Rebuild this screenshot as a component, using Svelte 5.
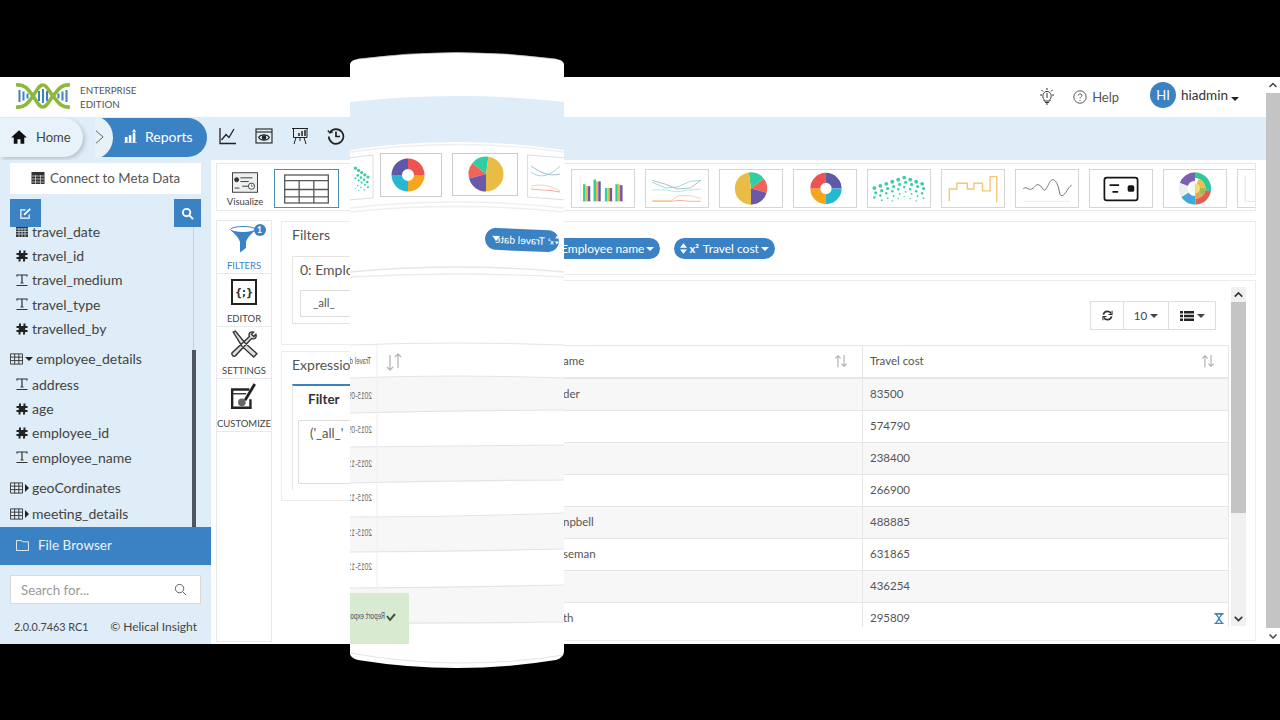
<script>
  function pt(cx, cy, r, a) {
    const t = ((a - 90) * Math.PI) / 180;
    return `${(cx + r * Math.cos(t)).toFixed(2)} ${(cy + r * Math.sin(t)).toFixed(2)}`;
  }
  function sector(cx, cy, r0, r1, a0, a1) {
    const big = a1 - a0 > 180 ? 1 : 0;
    if (r0 === 0) return `M${cx} ${cy}L${pt(cx, cy, r1, a0)}A${r1} ${r1} 0 ${big} 1 ${pt(cx, cy, r1, a1)}Z`;
    return `M${pt(cx, cy, r0, a0)}L${pt(cx, cy, r1, a0)}A${r1} ${r1} 0 ${big} 1 ${pt(cx, cy, r1, a1)}L${pt(cx, cy, r0, a1)}A${r0} ${r0} 0 ${big} 0 ${pt(cx, cy, r0, a0)}Z`;
  }
  const Y = '#e9bd45', TE = '#2ecfa0', R = '#f0655a', P = '#6a58a8', B = '#26b8d0', O = '#f8a51e', D = '#5c5aa8', RD = '#ef5350';
  const pieSlices = [[-8, 52, TE], [52, 105, R], [105, 180, P], [180, 352, Y]];
  const donutSlices = [[0, 90, D], [90, 180, B], [180, 270, O], [270, 360, RD]];
  const burst = [
    [8, 17, 290, 360, '#7b62ae'], [11, 17, 0, 100, '#2fc79c'], [11, 17, 100, 178, '#e0604f'],
    [8, 17, 178, 238, '#43a7dc'], [8, 17, 238, 290, '#eeeeee'], [5, 11, 20, 85, '#e6c04a'],
    [5, 11, 85, 135, '#9dbb5c'], [5, 11, 135, 178, '#e9a24c'], [0, 5, 0, 180, '#f2dc7a'], [0, 5, 180, 360, '#f4f4f4']
  ];

  const tree = [
    { k: 'cal', t: 'travel_date' }, { k: 'num', t: 'travel_id' }, { k: 'txt', t: 'travel_medium' },
    { k: 'txt', t: 'travel_type' }, { k: 'num', t: 'travelled_by' },
    { k: 'open', t: 'employee_details' }, { k: 'txt', t: 'address' }, { k: 'num', t: 'age' },
    { k: 'num', t: 'employee_id' }, { k: 'txt', t: 'employee_name' },
    { k: 'closed', t: 'geoCordinates' }, { k: 'closed', t: 'meeting_details' }
  ];
  const rows = [
    ['der', '83500'], ['', '574790'], ['', '238400'], ['', '266900'],
    ['npbell', '488885'], ['seman', '631865'], ['', '436254'], ['th', '295809']
  ];
  // curved horizontal rules of the turning page: left, middle, right
  const rules = [[345, 343, 345], [378, 376, 378], [413, 411, 410], [447, 446, 445], [483, 481, 480], [517, 516, 513], [552, 551, 549], [588, 587, 585], [623, 623, 622], [653, 663, 655]];
  const curve = (a) => `M350 ${a[0]}Q457 ${2 * a[1] - (a[0] + a[2]) / 2} 564 ${a[2]}`;
  const stripe = (a, b) => `${curve(a)}L564 ${b[2]}Q457 ${2 * b[1] - (b[0] + b[2]) / 2} 350 ${b[0]}Z`;
  const dates = [[395, '2015-09'], [429, '2015-09'], [463, '2015-11'], [497, '2015-11'], [532, '2015-11'], [566, '2015-11']];
  const dots = [];
  for (let c = 0; c < 9; c++) for (let r = 0; r < 5; r++) {
    const top = 8 + Math.abs(c - 5) * 2.2 + r * 5;
    if (top < 34) dots.push([6 + c * 6.3 + (r % 2) * 1.5, top, Math.max(0.7, 2 - r * 0.35)]);
  }
</script>

{#snippet bars()}
  <svg class="thumbsvg" viewBox="0 0 64 39">
    <path d="M8 33H56M8 6V33" stroke="#e6e6e6" fill="none" stroke-width=".7" />
    {#each [[11, 18, 16, 16], [22, 23, 21, 21], [34, 14, 14, 14], [45, 18, 18, 17]] as g}
      <rect x={g[0]} y={33 - g[1]} width="2.6" height={g[1]} fill={TE} />
      <rect x={g[0] + 2.6} y={33 - g[2]} width="2.4" height={g[2]} fill={Y} />
      <rect x={g[0] + 5} y={33 - g[3]} width="2.6" height={g[3]} fill={P} />
    {/each}
  </svg>
{/snippet}
{#snippet lines()}
  <svg class="thumbsvg" viewBox="0 0 64 39" fill="none" stroke-width=".7">
    <path d="M6 11 20 15 32 20 46 19 57 11" stroke="#8a9aa8" />
    <path d="M6 13 20 19 32 18 46 12 57 11" stroke="#6dc6d8" />
    <path d="M6 21 20 21 32 23 46 21 57 20" stroke="#8fdcc8" />
    <path d="M6 32 26 32 34 27 46 27 57 30" stroke="#f4c27c" />
    <path d="M6 33 26 33 34 32 46 33 57 33" stroke="#ef8a7a" />
  </svg>
{/snippet}
{#snippet pie()}
  <svg class="thumbsvg" viewBox="0 0 64 39">
    {#each pieSlices as s}<path d={sector(32, 19.5, 0, 17, s[0], s[1])} fill={s[2]} />{/each}
  </svg>
{/snippet}
{#snippet donut()}
  <svg class="thumbsvg" viewBox="0 0 64 39">
    {#each donutSlices as s}<path d={sector(33, 19.5, 6, 16.5, s[0], s[1])} fill={s[2]} />{/each}
  </svg>
{/snippet}
{#snippet scatter()}
  <svg class="thumbsvg" viewBox="0 0 64 39">
    {#each dots as d}<circle cx={d[0]} cy={d[1]} r={d[2]} fill="#37cfa4" />{/each}
  </svg>
{/snippet}
{#snippet step()}
  <svg class="thumbsvg" viewBox="0 0 64 39" fill="none">
    <path d="M7 33V20H15V14H26V20H33V14H42V22H50V7H57V34" stroke="#f3c778" stroke-width="1.5" />
  </svg>
{/snippet}
{#snippet wave()}
  <svg class="thumbsvg" viewBox="0 0 64 39" fill="none">
    <path d="M7 33H57" stroke="#e5e5e5" stroke-width=".7" />
    <path d="M7 20C10 16 12 22 16 20S20 14 24 16 28 24 31 20 36 6 41 12 44 28 48 27 54 18 58 16" stroke="#6f6a70" stroke-width="1" />
  </svg>
{/snippet}
{#snippet card()}
  <svg class="thumbsvg" viewBox="0 0 64 39" fill="none">
    <rect x="14.5" y="8" width="35" height="24" rx="2.5" stroke="#151515" stroke-width="1.8" />
    <path d="M20 16H30M23 23H29" stroke="#151515" stroke-width="1.8" />
    <rect x="39" y="16" width="7" height="7" rx="2" fill="#151515" />
  </svg>
{/snippet}
{#snippet sunburst()}
  <svg class="thumbsvg" viewBox="0 0 64 39">
    {#each burst as s}<path d={sector(32, 19.5, s[0], s[1], s[2], s[3])} fill={s[4]} />{/each}
  </svg>
{/snippet}
{#snippet blank()}
  <svg class="thumbsvg" viewBox="0 0 64 39" fill="none"><path d="M7 6V33H18" stroke="#e5e5e5" /></svg>
{/snippet}
{#snippet sortIcon()}
  <svg class="sort" viewBox="0 0 16 16" fill="none" stroke="#a9a9a9" stroke-width="1.2">
    <path d="M4.5 15V2M1.5 5l3-3 3 3M11.5 1v13M8.5 11l3 3 3-3" />
  </svg>
{/snippet}
{#snippet caret()}<span class="caret"></span>{/snippet}

<div class="page">
  <div class="gap-top"></div>
  <div class="screen">
    <div class="app">
      <header class="header">
        <svg class="logo" viewBox="0 0 56 26" fill="none">
          <path d="M4.5 7V19M8.5 8.500V17.500M12.500 10.500V15.500M24 8V18M28 6V20M32 8V18M43.500 10.500V15.500M47.500 8.500V17.500M51.500 7V19" stroke="#3a82c4" stroke-width="2" />
          <path d="M1 2C10 1 13 6 18 13S24 24 28 24 33 19 38 13 46 1 55 2" stroke="#8db93b" stroke-width="3.6" />
          <path d="M1 24C10 25 13 20 18 13S24 2 28 2 33 7 38 13 46 25 55 24" stroke="#8db93b" stroke-width="3.6" />
        </svg>
        <div class="edition"><span>ENTERPRISE</span><span>EDITION</span></div>
        <div class="spacer"></div>
        <svg class="bulb" viewBox="0 0 18 18" fill="none" stroke="#333" stroke-width="1">
          <path d="M6 12.500C4 10 4.500 4.500 9 4.500S14 10 12 12.500V14H6Z" /><path d="M7 15.500H11M8 17H10M9 6V11M9 1V3M2 8H4M14 8H16M3.500 3L5 4.500M14.500 3L13 4.500" />
        </svg>
        <div class="help">
          <svg viewBox="0 0 14 14" fill="none" stroke="#444" stroke-width=".9"><circle cx="7" cy="7" r="6.200" /><path d="M5.200 5.500C5.200 3.300 8.900 3.300 8.900 5.400 8.900 6.700 7 6.700 7 8.400M7 10V11" /></svg>
          <span>Help</span>
        </div>
        <div class="avatar">HI</div>
        <span class="user">hiadmin</span>{@render caret()}
      </header>

      <div class="band">
        <div class="crumbs">
          <div class="home">
            <svg viewBox="0 0 24 24" fill="#111"><path d="M12 3 1.500 12.500H5V21H10V15H14V21H19V12.500H22.500Z" /></svg>
            <span>Home</span>
          </div>
          <div class="reports">
            <svg class="chev" viewBox="0 0 10 16" fill="none" stroke="#555" stroke-width="1"><path d="M1 1 9 8 1 15" /></svg>
            <svg class="barsico" viewBox="0 0 16 16" fill="#fff"><path d="M1 9H4V15H1ZM5.500 7H8.500V15H5.500ZM10 4H13V15H10ZM0 15.500H15V16H0ZM11.500 0 14 3H9Z" /></svg>
            <span>Reports</span>
          </div>
        </div>
        <div class="navicons">
          <svg viewBox="0 0 18 18" fill="none" stroke="#222" stroke-width="1.300"><path d="M1 1V16.500H17" /><path d="M2.500 13 7 7.500 10 10.500 15 2" /></svg>
          <svg viewBox="0 0 18 18" fill="none" stroke="#222" stroke-width="1.100"><rect x="1" y="2" width="16" height="14" /><path d="M1 5H17" /><path d="M3.500 10.500C6 7 12 7 14.500 10.500 12 14 6 14 3.500 10.500Z" /><circle cx="9" cy="10.500" r="1.700" fill="#222" /></svg>
          <svg viewBox="0 0 18 18" fill="none" stroke="#222" stroke-width="1"><path d="M1 1.500H17M2.500 1.500V10.500H16V1.500M5 10.500 3 17M13 10.500 15 17M9 10.500V14" /><path d="M8 9V6M11 9V4M14 9V3" stroke-width="1.500" /></svg>
          <svg viewBox="0 0 18 18" fill="none" stroke="#222" stroke-width="1.700"><path d="M3 5.500A7.300 7.300 0 1 1 1.800 9.500" /><path d="M9 4.500V9.500H13" /><path d="M.8 3.500 3 6 5.800 5" stroke-width="1.300" /></svg>
        </div>
      </div>

      <div class="work">
        <aside class="sidebar">
          <div class="side-top">
            <div class="connect">
              <svg viewBox="0 0 14 14"><rect x=".5" y="1" width="13" height="12" fill="#333" /><path d="M1 5H13M1 8H13M1 11H13M4.500 4V13M9.500 4V13" stroke="#ccc" stroke-width=".8" /></svg>
              <span>Connect to Meta Data</span>
            </div>
            <div class="actions">
              <div class="sqbtn wide"><svg viewBox="0 0 14 14" fill="none" stroke="#fff" stroke-width="1.300"><path d="M11 8V12H2V3H7" /><path d="M5.500 8.500 12 2" stroke-width="2" /></svg></div>
              <div class="sqbtn"><svg viewBox="0 0 14 14" fill="none" stroke="#fff" stroke-width="2"><circle cx="6" cy="6" r="4" /><path d="M9 9 13 13" /></svg></div>
            </div>
          </div>
          <div class="tree">
            <div class="track"></div><div class="thumb"></div>
            {#each tree as n}
              {#if n.k === 'open' || n.k === 'closed'}
                <div class="group">
                  <svg class="tbl" viewBox="0 0 14 12" fill="none" stroke="#333"><path d="M.5 .5H13.500V11.500H.5ZM.5 4H13.500M.5 7.700H13.500M5 .5V11.500M9.500 .5V11.500" /></svg>
                  {#if n.k === 'open'}<span class="tri-d"></span>{:else}<span class="tri-r"></span>{/if}
                  <span>{n.t}</span>
                </div>
              {:else}
                <div class="leaf">
                  {#if n.k === 'cal'}
                    <svg viewBox="0 0 12 12"><rect width="12" height="12" fill="#333" /><path d="M0 4H12M0 6.500H12M0 9H12M3 3V12M6 3V12M9 3V12" stroke="#dcebf5" stroke-width=".7" /></svg>
                  {:else if n.k === 'num'}
                    <svg viewBox="0 0 12 12" fill="none" stroke="#222" stroke-width="2"><path d="M4 .5 3.500 11.500M8.500 .5 8 11.500M.5 4H11.500M.5 8H11.500" /><circle cx="6" cy="6" r="2" fill="#222" stroke="none" /></svg>
                  {:else}
                    <svg viewBox="0 0 12 12" fill="none" stroke="#333" stroke-width="1.200"><path d="M1 2.500V1H11V2.500M6 1V9M4.500 9H7.500M.5 11.500H11.500" /></svg>
                  {/if}
                  <span>{n.t}</span>
                </div>
              {/if}
            {/each}
          </div>
          <div class="browser">
            <svg viewBox="0 0 14 12" fill="none" stroke="#fff" stroke-width=".9"><path d="M.5 .5H6L7 2H13.500V11.500H.5Z" /></svg>
            <span>File Browser</span>
          </div>
          <div class="searchbox">
            <span>Search for...</span>
            <svg viewBox="0 0 14 14" fill="none" stroke="#555" stroke-width="1"><circle cx="6" cy="6" r="4.500" /><path d="M9.500 9.500 13 13" /></svg>
          </div>
          <div class="foot"><span class="ver">2.0.0.7463 RC1</span><span>© Helical Insight</span></div>
        </aside>

        <main class="main">
          <div class="toolbar">
            <div class="viz">
              <svg viewBox="0 0 28 22" fill="none" stroke="#333"><rect x=".5" y=".5" width="27" height="21" fill="#eef0f0" /><path d="M9 6H22M9 10H18M3 17H8M11 15H18" stroke-width="1" /><circle cx="5" cy="8" r="2.200" fill="#333" /><circle cx="21" cy="15" r="3.300" fill="#fff" /><path d="M21 13V15H23" stroke-width=".7" /></svg>
              <span>Visualize</span>
            </div>
            <div class="tablepick">
              <svg viewBox="0 0 46 30" fill="none" stroke="#555" stroke-width="1.300"><rect x=".7" y=".7" width="44.600" height="28.600" /><path d="M.7 6.500H45.300M.7 15.500H45.300M.7 23H45.300M15.500 6.500V29.300M30.500 6.500V29.300" /></svg>
            </div>
            <div class="thumbs">
              <div class="th">{@render bars()}</div>
              <div class="th">{@render lines()}</div>
              <div class="th">{@render pie()}</div>
              <div class="th">{@render donut()}</div>
              <div class="th">{@render scatter()}</div>
              <div class="th">{@render step()}</div>
              <div class="th">{@render wave()}</div>
              <div class="th">{@render card()}</div>
              <div class="th">{@render sunburst()}</div>
              <div class="th">{@render blank()}</div>
            </div>
          </div>

          <div class="lower">
            <nav class="rail">
              <div class="railitem" style="height:53px">
                <div class="funnel">
                  <svg viewBox="0 0 26 27"><ellipse cx="13" cy="3.500" rx="12.500" ry="3" fill="#fff" stroke="#3a82c4" /><path d="M.5 4C5 8 9 12 10 16V26.500L16 22V16C17 12 21 8 25.500 4 20 7 6 7 .5 4Z" fill="#3a82c4" /></svg>
                  <b class="badge">1</b>
                </div>
                <span class="blue">FILTERS</span>
              </div>
              <div class="railitem" style="height:53px">
                <div class="editorbox">{'{;}'}</div>
                <span>EDITOR</span>
              </div>
              <div class="railitem" style="height:52px">
                <svg class="rico" viewBox="0 0 26 26" fill="none" stroke="#333" stroke-width="1.300"><path d="M3 2 5 1 14 12 25 22 22 25 11 15ZM22 2C19 1 17 3 18 6L2 21C1 23 3 25 5 24L20 8C23 9 25 7 24 4L22 6 20 4Z" fill="#ddd" /></svg>
                <span>SETTINGS</span>
              </div>
              <div class="railitem" style="height:53px">
                <svg class="rico" viewBox="0 0 26 26" fill="none" stroke="#222" stroke-width="2.200"><path d="M18 6H2V23H19V15" /><path d="M2 10H15" stroke-width="1.200" /><path d="M23 1 14 16" stroke-width="2.600" /><circle cx="11" cy="18" r="3.500" fill="#666" stroke="none" /></svg>
                <span>CUSTOMIZE</span>
              </div>
            </nav>

            <div class="stage-a">
              <section class="box filters">
                <h4>Filters</h4>
                <div class="subbox">
                  <div class="subttl">0: Employee</div>
                  <div class="inp">_all_</div>
                </div>
              </section>
              <section class="box expr">
                <h4>Expressions</h4>
                <div class="tabs">
                  <b>Filter</b>
                  <div class="area">('_all_'</div>
                </div>
              </section>
            </div>

            <div class="stage-b">
              <section class="pillbox">
                <div class="pill first"><span>Employee name</span>{@render caret()}</div>
                <div class="pill">
                  <svg viewBox="0 0 8 12" fill="#fff"><path d="M4 0 8 5H0ZM4 12 0 7H8Z" /></svg>
                  <b>x²</b><span>Travel cost</span>{@render caret()}
                </div>
              </section>
              <section class="tablebox">
                <div class="tablecol">
                  <div class="btns">
                    <div class="btn w33"><svg viewBox="0 0 12 12" fill="none" stroke="#333" stroke-width="1.900"><path d="M1.500 5A4.500 4.500 0 0 1 10 4M10.500 7A4.500 4.500 0 0 1 2 8" /><path d="M11 .8V4.800H7M1 11.200V7.200H5" stroke-width="1.100" /></svg></div>
                    <div class="btn w45"><span>10</span>{@render caret()}</div>
                    <div class="btn w47"><svg viewBox="0 0 14 10" fill="#222"><path d="M0 0H3V2.500H0ZM4 0H14V2.500H4ZM0 3.700H3V6.200H0ZM4 3.700H14V6.200H4ZM0 7.400H3V9.900H0ZM4 7.400H14V9.900H4Z" /></svg>{@render caret()}</div>
                  </div>
                  <div class="tbl-grid">
                    <div class="tr head">
                      <div class="td name"><span>ame</span>{@render sortIcon()}</div>
                      <div class="td"><span>Travel cost</span>{@render sortIcon()}</div>
                    </div>
                    {#each rows as r, i}
                      <div class="tr" class:odd={i % 2 === 0}>
                        <div class="td name"><span>{r[0]}</span></div>
                        <div class="td">
                          <span>{r[1]}</span>
                          {#if i === 7}<svg class="hourglass" viewBox="0 0 10 12" fill="#3a82c4"><path d="M0 0H10V1.500H9L6 5.500V6.500L9 10.500H10V12H0V10.500H1L4 6.500V5.500L1 1.500H0ZM3 2 7 2 5 4.500ZM2.500 10.500H7.500L5 8Z" fill-rule="evenodd" /></svg>{/if}
                        </div>
                      </div>
                    {/each}
                  </div>
                </div>
                <div class="vbar">
                  <svg viewBox="0 0 14 14" fill="none" stroke="#333" stroke-width="1.500"><path d="M3.500 9 7 5.500 10.500 9" /></svg>
                  <div class="vthumb"></div>
                  <div class="vrest"></div>
                  <svg viewBox="0 0 14 14" fill="none" stroke="#333" stroke-width="1.500"><path d="M3.500 5.500 7 9 10.500 5.500" /></svg>
                </div>
              </section>
            </div>
          </div>
        </main>
      </div>
    </div>

    <div class="pagebar">
      <svg viewBox="0 0 14 14" fill="none" stroke="#444" stroke-width="1.500"><path d="M3.500 9 7 5.500 10.500 9" /></svg>
      <div class="pagethumb"></div>
      <svg viewBox="0 0 14 14" fill="none" stroke="#444" stroke-width="1.500"><path d="M3.500 5.500 7 9 10.500 5.500" /></svg>
    </div>
  </div>

  <svg class="turn" viewBox="350 52 214 618" width="214" height="618">
    <defs>
      <clipPath id="cyl"><path d="M350 64Q351 60 358 59Q457 46 556 59Q563 60 564 64V652Q563 658 556 660Q457 676 358 660Q351 658 350 654Z" /></clipPath>
    </defs>
    <path d="M350 64Q351 60 358 59Q457 46 556 59Q563 60 564 64V652Q563 658 556 660Q457 676 358 660Q351 658 350 654Z" fill="#fff" />
    <path d="M358 59Q457 46 556 59" fill="none" stroke="#bbb" stroke-width=".7" />
    <g clip-path="url(#cyl)">
      <path d="M350 102Q457 90 564 102V150Q457 134 350 150Z" fill="#deedf7" />
      <g fill="none" stroke="#efefef" stroke-width="1.300">
        <path d="M350 152Q457 137 564 152" />
        <path d="M350 208Q457 196 564 208" />
        <path d="M350 212Q457 201 564 212" />
        <path d="M350 272Q457 262 564 272" stroke="#e6e6e6" />
        <path d="M350 277Q457 271 564 277" stroke="#ececec" />
      </g>

      <polygon points="348,158 373,155 373,198 348,200" fill="#fff" stroke="#ddd" />
      <g>
        {#each dots as d}
          {#if d[0] < 32}<circle cx={371 - d[0] * 0.5} cy={158 + d[1]} r={d[2] * 0.8} fill="#37cfa4" />{/if}
        {/each}
      </g>
      <rect x="380.500" y="153.500" width="61" height="43" fill="#fff" stroke="#ccc" />
      <g transform="translate(816 0) scale(-1 1)">
        {#each donutSlices as s}<path d={sector(408, 175, 6, 16.500, s[0], s[1])} fill={s[2]} />{/each}
      </g>
      <rect x="452.500" y="153.500" width="65" height="42" fill="#fff" stroke="#ccc" />
      <g transform="translate(972 0) scale(-1 1)">
        {#each pieSlices as s}<path d={sector(486, 174, 0, 17.500, s[0], s[1])} fill={s[2]} />{/each}
      </g>
      <polygon points="527.500,155 566,158 566,200 527.500,197" fill="#fff" stroke="#ddd" />
      <g fill="none" stroke-width=".7">
        <path d="M531 166C540 172 548 177 560 174" stroke="#8a9aa8" />
        <path d="M531 172C540 179 550 176 560 166" stroke="#6dc6d8" />
        <path d="M531 186C540 184 550 185 560 191" stroke="#f4c27c" />
        <path d="M531 189C540 190 550 190 560 192" stroke="#ef8a7a" />
      </g>

      <g transform="rotate(2.500 522 240)">
        <rect x="485" y="229" width="74" height="22" rx="11" fill="#3a82c4" />
        <path d="M492 237H500L496 242Z" fill="#fff" />
        <text class="mirror pilltext" transform="translate(545 244) scale(-1 1)">Travel date</text>
        <text class="mirror pillx" transform="translate(554 243) scale(-1 1)">x²</text>
        <path d="M557 234 559 237H555ZM557 243 555 240H559Z" fill="#fff" />
      </g>

      {#each [1, 3, 5, 7] as i}
        <path d={stripe(rules[i], rules[i + 1])} fill="#f7f7f7" />
      {/each}
      <g fill="none" stroke="#e4e4e4" stroke-width="1.100">
        {#each rules as a}<path d={curve(a)} />{/each}
      </g>
      <path d="M377 345V642" stroke="#eee" fill="none" />
      <g transform="translate(394 362) scale(-1 1)" fill="none" stroke="#b5b5b5" stroke-width="1.300">
        <path d="M-4 -8V6M-7 -5-4 -8-1 -5M4 -7V8M1 5 4 8 7 5" />
      </g>
      <text class="mirror hdtext" transform="translate(371 364) scale(-.7 1)">Travel date</text>
      {#each dates as d}
        <text class="mirror cell" transform="translate(372 {d[0] + 4}) scale(-.7 1)">{d[1]}</text>
      {/each}
      <rect x="350" y="593" width="59" height="51" fill="#d8ead0" />
      <text class="mirror green" transform="translate(385 619) scale(-.72 1)">Report export</text>
      <path d="M387 616 390 620 395 614" stroke="#3e5a36" stroke-width="2" fill="none" />
    </g>
  </svg>
  <div class="gap-bottom"></div>
</div>

<style>
  :global(body) { margin: 0; background: #000; }
  .page {
    position: relative; width: 1280px; height: 720px; background: #000; overflow: hidden;
    font-family: Lato, "Open Sans", sans-serif; color: #444; display: flex; flex-direction: column;
  }
  .gap-top { height: 77px; flex: none; }
  .gap-bottom { flex: 1; }
  .screen { height: 567px; flex: none; display: flex; background: #fff; overflow: hidden; }
  .app { width: 1266px; flex: none; display: flex; flex-direction: column; }
  .spacer { flex: 1; }

  .header { height: 40px; flex: none; display: flex; align-items: center; padding-left: 15px; }
  .logo { width: 56px; height: 26px; margin-top: -2px; }
  .edition { display: flex; flex-direction: column; margin-left: 9px; font-size: 9.800px; line-height: 14px; color: #555; margin-top: -1px; }
  .bulb { width: 18px; height: 18px; margin-top: -3px; }
  .help { display: flex; align-items: center; gap: 5px; margin-left: 17px; font-size: 13px; color: #555; margin-top: -1px; }
  .help svg { width: 14px; height: 14px; }
  .avatar {
    width: 26px; height: 26px; border-radius: 50%; background: #3a82c4; color: #fff; font-size: 13px;
    display: flex; align-items: center; justify-content: center; margin-left: 31px; margin-top: -4px;
  }
  .user { font-size: 13.500px; margin-left: 5px; color: #333; margin-top: -4px; }
  .caret {
    display: inline-block; width: 0; height: 0; border-left: 4px solid transparent; border-right: 4px solid transparent;
    border-top: 4px solid currentColor; margin-left: 3px; vertical-align: middle;
  }
  .header .caret { margin-right: 27px; margin-top: 3px; color: #222; }

  .band { height: 43px; flex: none; background: #deedf7; display: flex; align-items: center; }
  .crumbs { display: flex; height: 39px; margin-top: -3px; }
  .home {
    width: 83px; background: #e8f2f9; border-radius: 0 20px 20px 0; box-shadow: 2px 2px 4px rgba(0,0,0,.18);
    display: flex; align-items: center; gap: 8px; padding: 0 0 0 10px; box-sizing: border-box; font-size: 13px; color: #444;
  }
  .home svg { width: 18px; height: 18px; }
  .reports {
    position: relative; margin-left: 12px; width: 112px; background: #3a82c4; border-radius: 0 20px 20px 0; color: #fff; overflow: hidden;
    display: flex; align-items: center; font-size: 14px; padding: 0 0 2px 29px; box-sizing: border-box; gap: 7px;
  }
  .reports::before {
    content: ""; position: absolute; left: -22px; top: -2px; width: 40px; height: 43px; border-radius: 50%; background: #e6f1f8;
  }
  .chev { position: absolute; left: 0; top: 11px; width: 9px; height: 16px; }
  .barsico { width: 14px; height: 14px; }
  .navicons { display: flex; gap: 18px; margin-left: 12px; margin-top: -5px; }
  .navicons svg { width: 18px; height: 18px; }

  .work { flex: 1; display: flex; min-height: 0; }
  .sidebar { width: 211px; flex: none; background: #deedf7; display: flex; flex-direction: column; }
  .side-top { padding: 3px 10px 0; position: relative; z-index: 1; margin-bottom: -8px; }
  .connect {
    height: 31px; background: #fff; display: flex; align-items: center; justify-content: center; gap: 5px;
    font-size: 13.300px; color: #555; padding-bottom: 1px; box-sizing: border-box;
  }
  .connect svg { width: 14px; height: 14px; }
  .actions { display: flex; justify-content: space-between; margin-top: 5px; }
  .sqbtn { width: 27px; height: 28px; background: #3a82c4; display: flex; align-items: center; justify-content: center; }
  .sqbtn.wide { width: 31px; }
  .sqbtn svg { width: 13px; height: 13px; }
  .tree { height: 308px; flex: none; position: relative; overflow: hidden; font-size: 14px; color: #444; }
  .track { position: absolute; left: 193px; top: 0; bottom: 0; width: 1px; background: #c5d2db; }
  .thumb { position: absolute; left: 192px; top: 131px; bottom: 0; width: 4px; background: #4b5660; }
  .leaf { height: 24.400px; display: flex; align-items: center; padding-left: 16px; gap: 4px; }
  .leaf svg { width: 12px; height: 12px; }
  .group { height: 26px; margin-top: 5px; display: flex; align-items: center; padding-left: 10px; gap: 2px; }
  .group + .group { margin-top: 0; }
  .tbl { width: 13px; height: 12px; }
  .tri-d { width: 0; height: 0; border-left: 4px solid transparent; border-right: 4px solid transparent; border-top: 4px solid #222; margin-right: 1px; }
  .tri-r { width: 0; height: 0; border-top: 4px solid transparent; border-bottom: 4px solid transparent; border-left: 4px solid #222; margin-right: 1px; }
  .browser {
    height: 38px; flex: none; background: #3a82c4; color: #eaf2fa; display: flex; align-items: center;
    padding: 0 0 2px 16px; box-sizing: border-box; gap: 9px; font-size: 13.500px;
  }
  .browser svg { width: 13px; height: 11px; }
  .searchbox {
    height: 29px; margin: 10px 10px 0; background: #fff; border: 1px solid #d9d9d9; box-sizing: border-box;
    display: flex; align-items: center; justify-content: space-between; padding: 0 13px 0 10px; font-size: 13.300px; color: #999;
  }
  .searchbox svg { width: 13px; height: 13px; }
  .foot { display: flex; justify-content: space-between; align-items: baseline; padding: 15px 14px 0; font-size: 12px; color: #444; }
  .ver { font-size: 10.800px; }

  .main { flex: 1; min-width: 0; padding: 3px 10px 0 5px; display: flex; flex-direction: column; }
  .toolbar {
    height: 48px; flex: none; box-sizing: border-box; border: 1px solid #e8e8e8; display: flex; align-items: flex-start; overflow: hidden; padding-top: 5px;
  }
  .viz { width: 56px; flex: none; display: flex; flex-direction: column; align-items: center; font-size: 9.500px; color: #444; gap: 3px; padding-top: 3px; box-sizing: border-box; }
  .viz svg { width: 26px; height: 21px; }
  .tablepick {
    width: 65px; height: 39px; flex: none; box-sizing: border-box; border: 1px solid #4a8db8; display: flex;
    align-items: center; justify-content: center; margin-left: 1px;
  }
  .tablepick svg { width: 45px; height: 30px; }
  .thumbs { display: flex; gap: 10px; margin-left: 232px; }
  .th { width: 64px; height: 39px; flex: none; box-sizing: border-box; border: 1px solid #d5d5d5; background: #fff; }
  .thumbsvg { width: 62px; height: 37px; display: block; }

  .lower { flex: 1; min-height: 0; display: flex; margin-top: 9px; }
  .rail { width: 56px; flex: none; box-sizing: border-box; border: 1px solid #e8e8e8; height: 422px; }
  .railitem {
    box-sizing: border-box; border-bottom: 1px solid #e8e8e8; display: flex; flex-direction: column; align-items: center;
    justify-content: flex-end; font-size: 9.500px; color: #444; padding-bottom: 2px; gap: 3px;
  }
  .blue { color: #3a82c4; }
  .funnel { position: relative; width: 26px; height: 27px; margin-right: 3px; margin-bottom: 4px; }
  .funnel svg { width: 26px; height: 27px; display: block; }
  .badge {
    position: absolute; left: 24px; top: -2px; width: 12px; height: 12px; border-radius: 50%; background: #3a82c4; color: #fff;
    font-size: 8.500px; line-height: 12px; text-align: center; font-weight: 700;
  }
  .editorbox {
    width: 22px; height: 22px; border: 2px solid #222; box-sizing: content-box; font-family: "DejaVu Sans", sans-serif; font-size: 10px;
    font-weight: 700; color: #333; display: flex; align-items: center; justify-content: center; margin-bottom: 5px;
  }
  .rico { width: 28px; height: 28px; margin-bottom: 4px; }

  .stage-a { width: 69px; margin-left: 9px; flex: none; overflow: hidden; }
  .box { width: 200px; box-sizing: border-box; border: 1px solid #ececec; padding: 4px 10px 0; }
  .box h4 { margin: 0; font-size: 14px; font-weight: 400; line-height: 17px; color: #555; }
  .filters { margin-top: 1px; height: 124px; }
  .subbox { margin-top: 13px; height: 68px; border: 1px solid #e4e4e4; padding: 4px 7px; box-sizing: border-box; }
  .subttl { font-size: 14px; line-height: 17px; color: #555; }
  .inp { margin-top: 12px; height: 27px; border: 1px solid #ddd; box-sizing: border-box; font-size: 11.500px; line-height: 24px; padding-left: 12px; color: #555; }
  .expr { margin-top: 6px; height: 150px; }
  .tabs { margin-top: 11px; border-top: 2px solid #3a82c4; border-left: 1px solid #e4e4e4; height: 106px; box-sizing: border-box; padding: 5px 5px; }
  .tabs b { display: block; padding-left: 10px; font-size: 13.500px; line-height: 17px; color: #333; }
  .area { margin-top: 12px; height: 64px; border: 1px solid #ddd; box-sizing: border-box; padding: 4px 11px; font-size: 13px; color: #555; }

  .stage-b { flex: 1; min-width: 0; display: flex; flex-direction: column; }
  .pillbox {
    height: 54px; margin-top: 1px; flex: none; box-sizing: border-box; border: 1px solid #ececec; display: flex; align-items: center; gap: 14px;
  }
  .pill {
    height: 21px; background: #3a82c4; color: #fff; border-radius: 11px; display: flex; align-items: center; font-size: 12px; padding: 0 6px 0 6px; gap: 1px; margin-top: 1px;
  }
  .pill svg { width: 7px; height: 11px; }
  .pill b { font-size: 11px; margin: 0 3px 0 1px; }
  .pill .caret { margin-left: 1px; }
  .pill.first { margin-left: 189px; padding-left: 21px; }
  .tablebox {
    margin-top: 5px; height: 361px; flex: none; box-sizing: border-box; border: 1px solid #ececec; border-left: 0;
    display: flex; padding-right: 9px;
  }
  .tablecol { width: 879px; flex: none; height: 346px; overflow: hidden; }
  .btns { display: flex; justify-content: flex-end; margin: 20px 13px 15px 0; height: 29px; font-size: 11.500px; }
  .btn { box-sizing: border-box; height: 29px; border: 1px solid #ddd; border-left-width: 0; display: flex; align-items: center; justify-content: center; color: #444; }
  .w33 { width: 34px; border-left-width: 1px; } .w45 { width: 45px; } .w47 { width: 47px; }
  .w33 svg { width: 11px; height: 11px; } .w47 svg { width: 14px; height: 10px; }
  .tbl-grid { border-top: 1px solid #e6e6e6; border-right: 1px solid #e6e6e6; font-size: 11.500px; color: #555; }
  .tr { display: grid; grid-template-columns: 512px 1fr; height: 32px; box-sizing: border-box; border-bottom: 1px solid #e6e6e6; }
  .tr.head { height: 33px; border-bottom-width: 2px; }
  .tr.odd { background: #f7f7f7; }
  .td { display: flex; align-items: center; justify-content: space-between; padding: 0 13px 2px 7px; position: relative; border-left: 1px solid #e6e6e6; box-sizing: border-box; }
  .td.name { padding-left: 213px; padding-right: 14px; border-left: 0; }
  .sort { width: 14px; height: 16px; }
  .hourglass { position: absolute; right: 4px; top: 10px; width: 10px; height: 11px; }
  .vbar { margin-top: 6px; margin-left: 2px; width: 15px; height: 339px; background: #f0f0f0; display: flex; flex-direction: column; }
  .vbar svg { width: 15px; height: 15px; flex: none; }
  .vthumb { height: 211px; background: #c4c4c4; flex: none; }
  .vrest { flex: 1; }
  .pagebar { width: 14px; flex: none; display: flex; flex-direction: column; background: #fff; }
  .pagebar svg { width: 14px; height: 14px; flex: none; margin: 1px 0; }
  .pagethumb { flex: 1; background: #c4c4c4; }

  .turn { position: absolute; left: 350px; top: 52px; }
  .mirror { font-family: Lato, sans-serif; }
  .pilltext { font-size: 10.500px; fill: #fff; }
  .pillx { font-size: 7px; fill: #fff; font-weight: 700; }
  .hdtext { font-size: 9px; fill: #555; }
  .cell { font-size: 9px; fill: #666; }
  .green { font-size: 9px; fill: #556; }
</style>
